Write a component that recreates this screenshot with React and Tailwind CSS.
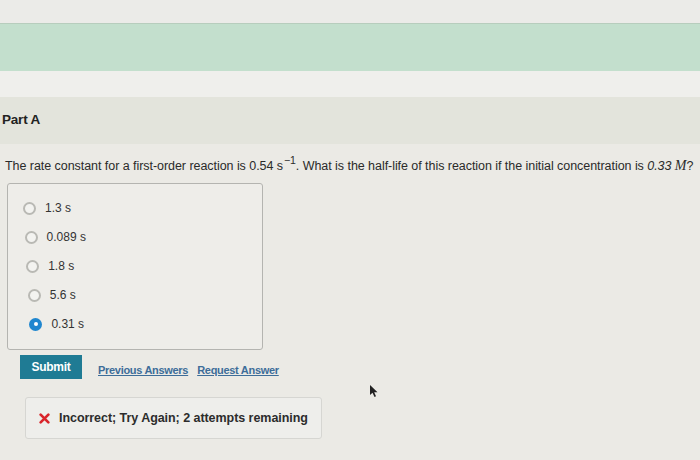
const options = ['1.3 s', '0.089 s', '1.8 s', '5.6 s', '0.31 s']

const Radio = ({ checked }) =>
  checked ? (
    <span className="w-[13px] h-[13px] rounded-full bg-[#1f86cf] flex items-center justify-center shrink-0">
      <span className="w-[4px] h-[4px] rounded-full bg-white" />
    </span>
  ) : (
    <span className="w-[13px] h-[13px] rounded-full border-2 border-[#b9b9b4] bg-[#f3f3f0] shrink-0" />
  )

export default function App() {
  return (
    <div
      className="relative w-[700px] h-[460px] overflow-hidden bg-[#ebeae5] text-[#2b2b2b]"
      style={{ fontFamily: '"Liberation Sans", Arial, sans-serif' }}
    >
      <div className="h-[23px] bg-[#ebebe8]" />
      <div className="h-[48px] bg-[#c3dfcd] border-t border-[#b7cdbd]" />
      <div className="h-[26px] bg-[#efefec]" />
      <div className="h-[47px] bg-[#e3e4dc] flex items-center pl-[2px]">
        <h2 className="text-[13.5px] font-bold text-[#222] tracking-[-0.2px]">Part A</h2>
      </div>

      <div className="pt-[11px] pl-[5px]">
        <p className="text-[12.5px] tracking-[-0.05px] whitespace-nowrap text-[#2a2a2a]">
          The rate constant for a first-order reaction is 0.54 s
          <sup className="text-[10.5px] -top-[6px] ml-[1px]">−1</sup>. What is the half-life of this
          reaction if the initial concentration is <i>0.33</i>{' '}
          <i style={{ fontFamily: '"Liberation Serif", serif' }} className="text-[14px]">M</i>?
        </p>

        <div className="mt-[7px] ml-[2px] w-[256px] h-[167px] border border-[#b4b4b0] rounded-[3px] bg-[#eeede9] pt-[17px] pl-[15px] flex flex-col gap-[15px]">
          {options.map((o, i) => (
            <label key={o} className="flex items-center gap-[9px] h-[14px]" style={{ paddingLeft: i * 1.6 }}>
              <Radio checked={i === 4} />
              <span className="text-[12px] text-[#333]">{o}</span>
            </label>
          ))}
        </div>

        <div className="mt-[5px] ml-[15px] flex items-center">
          <button className="w-[62px] h-[24px] bg-[#1f7b94] text-white text-[12px] font-bold tracking-[-0.3px]">
            Submit
          </button>
          <a className="ml-[16px] mt-[6px] text-[11px] font-bold tracking-[-0.3px] text-[#3d6d99] underline">
            Previous Answers
          </a>
          <a className="ml-[9px] mt-[7px] text-[11px] font-bold tracking-[-0.3px] text-[#3d6d99] underline">
            Request Answer
          </a>
        </div>

        <div className="mt-[18px] ml-[20px] w-[297px] h-[42px] border border-[#d6d6d2] rounded-[3px] bg-[#eeeeeb] flex items-center pl-[13px] gap-[9px]">
          <svg width="11" height="11" viewBox="0 0 10 10">
            <path d="M1.5 1.5 L8.5 8.5 M8.5 1.5 L1.5 8.5" stroke="#d9252b" strokeWidth="2.4" strokeLinecap="round" />
          </svg>
          <span className="text-[12.5px] font-bold tracking-[-0.05px] text-[#2c2c2c]">
            Incorrect; Try Again; 2 attempts remaining
          </span>
        </div>
      </div>

      <svg className="absolute left-[369px] top-[384px]" width="11" height="14" viewBox="0 0 11 14">
        <path d="M1 1 L1 11 L3.5 8.8 L5.5 13 L7 12.3 L5.2 8.2 L8.5 8.2 Z" fill="#222" />
      </svg>
    </div>
  )
}
